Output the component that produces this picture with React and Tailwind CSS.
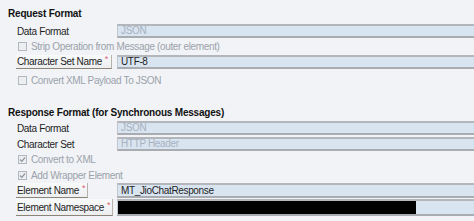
import React from 'react';

// Read-only / editable text field, runs off the right edge of the page
const Field = ({ value, readOnly, redacted, h = 'h-[14px]' }) => (
    <div className={`flex-1 ${h} flex items-stretch bg-[#d9e4f1] border-t-2 border-b-2 border-t-[#b3b7bc] border-b-[#a9adb2] border-l border-l-[#c4c8cc] -mr-2`}>
        {redacted ? (
            <div className="w-[298px] bg-black" />
        ) : (
            <span className={`pl-[3px] leading-[10px] flex items-center whitespace-nowrap ${readOnly ? 'text-[#a7b1bf]' : 'text-[#1e1e1e]'}`}>{value}</span>
        )}
    </div>
);

const Label = ({ text, required, width }) =>
    required ? (
        <div className="w-[101px] shrink-0 h-full flex items-stretch">
            <div
                className="h-full flex items-center whitespace-nowrap pl-[1px] border-b border-r border-b-[#8c8478] border-r-[#b7b2aa] bg-gradient-to-b from-[#f9fafb] to-[#eceef0]"
                style={{ width }}
            >
                <span className="text-[#1e1e1e]">{text}</span>
                <span className="text-[#e0646f] ml-[3px] text-[9px] -mt-[3px]">*</span>
            </div>
        </div>
    ) : (
        <div className="w-[101px] shrink-0 pl-[1px] whitespace-nowrap text-[#1e1e1e]">{text}</div>
    );

const Row = ({ label, required, labelWidth, value, readOnly, redacted, h = 'h-[14px]' }) => (
    <div className={`flex items-center ${h} pl-[16px]`}>
        <Label text={label} required={required} width={labelWidth} />
        <Field value={value} readOnly={readOnly} redacted={redacted} h={h} />
    </div>
);

const Check = ({ label, checked, h = 'h-[17px]' }) => (
    <div className={`flex items-center ${h} pl-[18px]`}>
        <div className="w-[9px] h-[9px] border border-[#b3b8bd] bg-[#eceef1] flex items-center justify-center">
            {checked && (
                <svg width="7" height="7" viewBox="0 0 7 7">
                    <path d="M1 3.5 L2.8 5.3 L6 1.5" stroke="#8e959d" strokeWidth="1.2" fill="none" />
                </svg>
            )}
        </div>
        <span className="ml-[4px] whitespace-nowrap text-[#9ba2ab]">{label}</span>
    </div>
);

const Header = ({ children }) => (
    <div className="h-[14px] flex items-center pl-[8px] whitespace-nowrap font-bold text-[#111] tracking-[-0.2px]">{children}</div>
);

const App = () => {
    return (
        <div
            className="w-[474px] h-[221px] overflow-hidden bg-[#f1f3f6] text-[10px] tracking-[-0.35px] flex flex-col"
            style={{ fontFamily: '"Liberation Sans", Arial, sans-serif' }}
        >
            <div className="h-[6px]" />
            <Header>Request Format</Header>
            <div className="h-[4px]" />
            <Row label="Data Format" value="JSON" readOnly />
            <Check label="Strip Operation from Message (outer element)" />
            <Row label="Character Set Name" required labelWidth="96px" value="UTF-8" />
            <Check label="Convert XML Payload To JSON" h="h-[22px]" />

            <div className="h-[14px]" />
            <Header>Response Format (for Synchronous Messages)</Header>
            <div className="h-[2px]" />
            <Row label="Data Format" value="JSON" readOnly />
            <div className="h-[2px]" />
            <Row label="Character Set" value="HTTP Header" readOnly />
            <Check label="Convert to XML" checked />
            <Check label="Add Wrapper Element" checked h="h-[15px]" />
            <Row label="Element Name" required labelWidth="72px" value="MT_JioChatResponse" h="h-[15px]" />
            <div className="h-[1px]" />
            <Row label="Element Namespace" required labelWidth="97px" redacted h="h-[17px]" />
        </div>
    );
};

export default App;
